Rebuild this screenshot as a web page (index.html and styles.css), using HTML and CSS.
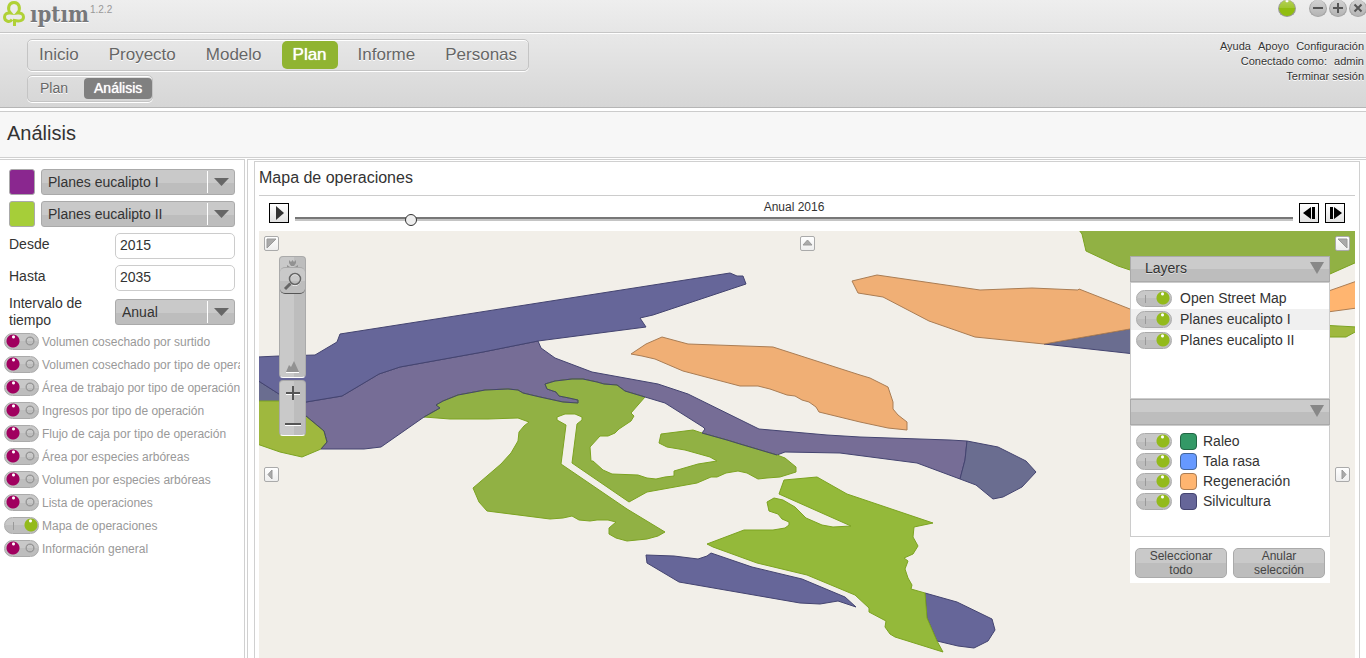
FILE: index.html
```html
<!DOCTYPE html>
<html lang="es">
<head>
<meta charset="UTF-8">
<meta name="viewport" content="width=device-width, initial-scale=1.0">
<title>Iptim - Análisis</title>
<link rel="stylesheet" href="styles.css">
</head>
<body>

<header class="topbar">
  <div class="logo">
    <svg class="logo-icon" width="24" height="28" viewBox="0 0 24 28" fill="none" stroke="#b0d136" stroke-width="3">
      <path d="M10 19.500C8 23 2.500 21.500 2.500 17C2.500 14 5 12.500 8.500 13C5 9 6.500 2.500 12 2.500C17.500 2.500 19 9 15.500 13C19 12.500 21.500 14 21.500 17C21.500 21 17 21.500 12.500 20.500V26"/>
    </svg>
    <span class="logo-text">ıptım</span>
    <span class="version">1.2.2</span>
  </div>
  <div class="window-buttons">
    <span class="status"></span>
    <button type="button" aria-label="Minimizar"><svg width="18" height="18" viewBox="0 0 18 18"><path d="M4 9H14"/></svg></button>
    <button type="button" aria-label="Ampliar"><svg width="18" height="18" viewBox="0 0 18 18"><path d="M4 9H14M9 4V14"/></svg></button>
    <button type="button" aria-label="Cerrar"><svg width="18" height="18" viewBox="0 0 18 18"><path d="M5.500 5.500L12.500 12.500M12.500 5.500L5.500 12.500"/></svg></button>
  </div>
</header>

<div class="navbar">
  <div class="menus">
    <nav class="menu">
      <a href="#">Inicio</a>
      <a href="#">Proyecto</a>
      <a href="#">Modelo</a>
      <a href="#" class="active">Plan</a>
      <a href="#">Informe</a>
      <a href="#">Personas</a>
    </nav>
    <nav class="submenu">
      <a href="#">Plan</a>
      <a href="#" class="active">Análisis</a>
    </nav>
  </div>
  <div class="user">
    <div><a href="#">Ayuda</a><a href="#">Apoyo</a><a href="#">Configuración</a></div>
    <div><span>Conectado como:</span><a href="#">admin</a></div>
    <div><a href="#">Terminar sesión</a></div>
  </div>
</div>

<h1>Análisis</h1>

<div class="page">

<aside class="sidebar">
  <form class="filters">
    <div class="plan-row">
      <span class="swatch plan-one"></span>
      <div class="select"><select aria-label="Plan I"><option>Planes eucalipto I</option></select></div>
    </div>
    <div class="plan-row">
      <span class="swatch plan-two"></span>
      <div class="select"><select aria-label="Plan II"><option>Planes eucalipto II</option></select></div>
    </div>
    <div class="field">
      <label for="desde">Desde</label>
      <input type="text" id="desde" value="2015">
    </div>
    <div class="field">
      <label for="hasta">Hasta</label>
      <input type="text" id="hasta" value="2035">
    </div>
    <div class="field interval">
      <label for="intervalo">Intervalo de tiempo</label>
      <div class="select"><select id="intervalo"><option>Anual</option></select></div>
    </div>
  </form>
  <div class="reports">
    <label><input type="checkbox" class="toggle">Volumen cosechado por surtido</label>
    <label><input type="checkbox" class="toggle">Volumen cosechado por tipo de operación</label>
    <label><input type="checkbox" class="toggle">Área de trabajo por tipo de operación</label>
    <label><input type="checkbox" class="toggle">Ingresos por tipo de operación</label>
    <label><input type="checkbox" class="toggle">Flujo de caja por tipo de operación</label>
    <label><input type="checkbox" class="toggle">Área por especies arbóreas</label>
    <label><input type="checkbox" class="toggle">Volumen por especies arbóreas</label>
    <label><input type="checkbox" class="toggle">Lista de operaciones</label>
    <label><input type="checkbox" class="toggle" checked>Mapa de operaciones</label>
    <label><input type="checkbox" class="toggle">Información general</label>
  </div>
</aside>

<main class="content">
<section class="panel">
  <h2>Mapa de operaciones</h2>

  <div class="timeline">
    <button type="button" aria-label="Reproducir"><svg width="18" height="18" viewBox="0 0 18 18"><path fill="#333" d="M6 2L14 9L6 16Z"/></svg></button>
    <div class="time">
      <label for="time">Anual 2016</label>
      <input type="range" id="time" min="0" max="18" value="2">
    </div>
    <div class="steps">
      <button type="button" aria-label="Anterior"><svg width="18" height="18" viewBox="0 0 18 18"><path d="M11 3V15L3 9ZM12 3H15V15H12Z"/></svg></button>
      <button type="button" aria-label="Siguiente"><svg width="18" height="18" viewBox="0 0 18 18"><path d="M8 3V15L16 9ZM4 3H7V15H4Z"/></svg></button>
    </div>
  </div>

  <div class="map">
    <svg class="areas" viewBox="259 231 1096 427" preserveAspectRatio="xMidYMin slice">
      <!-- vecinos -->
      <polygon class="green" points="1079,230 1082,234 1086,251 1118,266 1130,270 1200,285 1290,285 1330,274 1357,262 1357,230"/>
      <polygon class="slate" points="1044,344 1135,328 1200,345 1135,354"/>
      <polygon class="orange" points="852,281 877,275 980,290 1032,288 1078,290 1079,289 1130,309 1180,318 1130,329 1044,344 975,337 929,321 883,297 858,293"/>
      <polygon class="orange-light" points="1320,294 1357,281 1357,308 1320,313"/>
      <polygon class="lime" points="1320,325 1357,327 1357,331 1346,337 1320,337"/>
      <!-- franja norte -->
      <polygon class="slate" points="257,380 279,394 292,403 292,408 257,402"/>
      <polygon class="violet" points="306,402 342,396 379,374 400,367 483,352 538,341 541,348 555,358 592,372 658,384 688,394 759,429 827,435 860,437 950,440 967,441 965,460 960,479 917,463 840,453 785,452 777,455 740,444 727,440 702,433 705,429 703,427 665,403 645,397 625,391 617,385 604,384 597,382 583,379 572,379 555,381 545,384 547,389 556,392 559,396 569,398 578,400 578,403 563,402 540,397 523,393 518,390 508,389 485,390 458,395 443,401 436,405 440,408 424,417 381,447 364,449 321,449 327,442 324,431 306,416 290,402"/>
      <polygon class="blue" points="257,357 279,356 315,355 337,342 340,334 730,273 737,276 743,276 746,284 653,315 640,318 646,327 538,341 483,352 400,367 379,374 342,396 306,402 290,402 279,394 257,380"/>
      <polygon class="lime" points="257,401 282,401 306,416 324,431 327,442 321,449 302,457 280,452 257,444"/>
      <!-- eucaliptos centro -->
      <polygon class="green" points="424,417 450,419 488,419 518,418 529,422 524,426 519,432 518,441 511,453 501,464 473,488 479,502 487,511 550,519 563,518 572,516 579,520 590,521 597,520 608,520 616,522 609,528 609,534 616,538 627,541 647,539 658,536 665,532 627,509 561,464 566,425 557,420 557,417 565,414 575,414 582,417 582,420 577,424 572,463 629,502 647,492 697,483 711,477 717,477 726,473 738,471 747,473 758,479 767,478 780,477 796,472 796,467 785,458 777,455 740,444 727,440 702,433 693,430 661,434 659,443 667,447 685,450 710,457 717,461 698,464 674,471 674,476 665,477 656,479 647,478 638,475 612,474 603,470 593,461 591,461 590,447 600,436 608,436 615,433 619,429 631,421 634,416 631,413 645,397 625,391 617,385 604,384 597,382 583,379 572,379 555,381 545,384 547,389 556,392 559,396 569,398 578,400 578,403 563,402 540,397 523,393 518,390 508,389 485,390 458,395 443,401 436,405 440,408"/>
      <polyline class="edge" points="424,417 440,408 436,405 443,401 458,395 485,390 508,389 518,390 523,393 540,397 563,402 578,403 578,400 569,398 559,396 556,392 547,389 545,384 555,381 572,379 583,379 597,382 604,384 617,385 625,391 645,397"/>
      <polyline class="edge" points="702,433 727,440 740,444 777,455"/>
      <polyline class="edge" points="306,416 324,431 327,442 321,449"/>
      <polygon class="orange" points="631,354 646,344 662,337 688,344 773,347 860,375 870,378 888,387 893,402 893,409 898,415 907,422 907,430 888,428 860,422 819,412 816,407 809,402 802,400 795,396 787,395 770,389 758,386 740,386 683,371 655,359 642,356"/>
      <polygon class="slate" points="967,441 998,447 1026,461 1036,472 1022,487 1003,497 993,499 976,485 960,479 965,460"/>
      <!-- zona sur -->
      <polygon class="blue" points="925,593 957,602 992,619 995,630 988,641 974,648 958,646 937,641 927,618"/>
      <polygon class="lime-bright" points="707,544 744,530 773,530 785,528 789,525 789,522 782,519 778,514 769,511 767,502 774,498 783,500 795,507 806,518 822,525 833,527 851,526 779,494 784,480 817,477 847,494 933,523 914,527 913,537 918,546 913,554 904,558 908,561 905,569 908,578 912,585 911,589 925,593 927,618 937,641 943,652 895,637 890,634 885,627 886,621 869,612 869,608 855,595 807,575 757,563 713,547"/>
      <polygon class="blue" points="646,555 674,556 698,559 707,556 711,553 752,567 802,579 845,597 856,607 838,601 820,604 800,603 679,582 647,563"/>
    </svg>

    <button type="button" class="pan nw" aria-label="Noroeste"><svg width="13" height="13" viewBox="0 0 13 13"><path d="M2 2H11L2 11Z"/></svg></button>
    <button type="button" class="pan n" aria-label="Norte"><svg width="13" height="13" viewBox="0 0 13 13"><path d="M2 8L6.500 3L11 8Z"/></svg></button>
    <button type="button" class="pan ne" aria-label="Noreste"><svg width="13" height="13" viewBox="0 0 13 13"><path d="M2 2H11V11Z"/></svg></button>
    <button type="button" class="pan w" aria-label="Oeste"><svg width="13" height="13" viewBox="0 0 13 13"><path d="M7 2V11L3 6.500Z"/></svg></button>
    <button type="button" class="pan e" aria-label="Este"><svg width="13" height="13" viewBox="0 0 13 13"><path d="M6 2V11L10 6.500Z"/></svg></button>

    <div class="zoom">
      <div class="zoom-track">
        <svg width="25" height="10" viewBox="0 0 25 10"><path fill="#929292" d="M9 3L11 5L12.500 3L14 5L16 3V6L14 9H11L9 6ZM7 8L10 10H7ZM18 8L15 10H18Z"/></svg>
        <button type="button" class="zoom-handle" aria-label="Nivel de zoom"><svg width="25" height="26" viewBox="0 0 25 26" fill="none"><circle cx="15" cy="12" r="5.500" stroke="#fff" stroke-width="1"/><circle cx="15" cy="11" r="5.500" stroke="#666" stroke-width="1.500"/><path stroke="#666" stroke-width="3" d="M10.500 15.500L5 21"/></svg></button>
        <svg class="mountains" width="25" height="14" viewBox="0 0 25 14"><path fill="#929292" d="M6 11L9 4L11 6L14 0L19 11Z"/><path stroke="#fff" d="M6 11.500H19"/></svg>
      </div>
      <div class="zoom-buttons">
        <button type="button" aria-label="Acercar"><svg width="25" height="26" viewBox="0 0 25 26"><path stroke="#fff" d="M6 13.500H20"/><path stroke="#555" stroke-width="2" d="M6 12H20M13 5V19"/></svg></button>
        <button type="button" aria-label="Alejar"><svg width="25" height="26" viewBox="0 0 25 26"><path stroke="#fff" stroke-width="2" d="M5 18H21"/><path stroke="#555" stroke-width="2" d="M5 17H21"/></svg></button>
      </div>
    </div>

    <div class="layers">
      <div class="layers-head"><span>Layers</span><i></i></div>
      <div class="layers-list">
        <label><input type="checkbox" class="toggle" checked>Open Street Map</label>
        <label class="selected"><input type="checkbox" class="toggle" checked>Planes eucalipto I</label>
        <label><input type="checkbox" class="toggle" checked>Planes eucalipto II</label>
      </div>
      <div class="layers-head"><span></span><i></i></div>
      <div class="legend">
        <label><input type="checkbox" class="toggle" checked><span class="key raleo"></span>Raleo</label>
        <label><input type="checkbox" class="toggle" checked><span class="key tala"></span>Tala rasa</label>
        <label><input type="checkbox" class="toggle" checked><span class="key regeneracion"></span>Regeneración</label>
        <label><input type="checkbox" class="toggle" checked><span class="key silvicultura"></span>Silvicultura</label>
      </div>
      <div class="layers-buttons">
        <button type="button">Seleccionar todo</button>
        <button type="button">Anular selección</button>
      </div>
    </div>
  </div>
</section>
</main>

</div>

</body>
</html>
```

FILE: styles.css
```css
* { box-sizing: border-box; }
body { margin: 0; height: 100vh; display: flex; flex-direction: column; overflow: hidden; background: #fff; color: #333; font-family: "Liberation Sans", Arial, sans-serif; font-size: 14px; }
a { color: inherit; text-decoration: none; }
button { padding: 0; font-family: inherit; cursor: pointer; }
svg { display: block; }

/* header */
.topbar { display: flex; justify-content: space-between; height: 33px; flex: none; background: linear-gradient(#eee, #e6e6e6); border-bottom: 1px solid #c6c6c6; }
.logo { display: flex; align-items: flex-start; padding-left: 2px; }
.logo-text { margin-left: 4px; font: bold 22px/28px "DejaVu Serif Condensed", "DejaVu Serif", serif; color: #77787b; text-shadow: 0 1px 0 #fff; }
.version { margin-left: 1px; font-size: 10px; line-height: 19px; color: #999; }
.window-buttons { display: flex; gap: 2px; align-items: flex-start; }
.window-buttons button { width: 18px; height: 17px; border: 1px solid #a4a4a4; border-top: 0; border-radius: 50%; background: linear-gradient(#d2d2d2, #b4b4b4); display: flex; align-items: center; justify-content: center; }
.window-buttons button:last-child { margin-right: -1px; }
.window-buttons svg { flex: none; fill: none; stroke: #555; stroke-width: 2; }
.status { width: 18px; height: 17px; margin-right: 11px; border: 1px solid #999; border-top: 0; border-radius: 50%; background: radial-gradient(circle at 50% 5%, #fff 0 1px, transparent 2px), linear-gradient(#b4cf57, #a0c62f 50%, #91bd11 50%); }

.navbar { display: flex; justify-content: space-between; height: 75px; flex: none; padding: 5px 0 0 27px; background: linear-gradient(#e8e8e8, #d6d6d6); border-top: 1px solid #fff; border-bottom: 1px solid #b5b5b5; }
.menus { display: flex; flex-direction: column; align-items: flex-start; gap: 4px; }
.menu, .submenu { display: flex; border: 1px solid #c4c4c4; border-radius: 5px; box-shadow: 0 1px 0 #fff, inset 0 1px 0 #fff; color: #666; text-shadow: 0 1px 0 #fff; }
.menu { gap: 10px; padding: 1px; font-size: 17px; line-height: 28px; }
.menu a { padding: 0 10px; border-radius: 5px; }
.menu .active { padding: 0 11px; background: #90b431; color: #fff; text-shadow: 0 0 1px #fff; }
.submenu { gap: 6px; padding: 2px 0 2px 2px; font-size: 14px; line-height: 21px; }
.submenu a { padding: 0 10px; border-radius: 4px; }
.submenu .active { background: #808080; color: #fff; text-shadow: 0 0 1px #fff; }
.user { padding: 0 2px; font-size: 11px; line-height: 15px; text-align: right; text-shadow: 0 1px 0 #fff; }
.user div { display: flex; justify-content: flex-end; gap: 7px; }

h1 { flex: none; margin: 3px 0 0; padding: 0 7px; height: 47px; border-top: 1px solid #ccc; border-bottom: 1px solid #d0d0d0; background: #f7f7f7; font-size: 20px; line-height: 43px; font-weight: normal; }
.page { flex: 1; display: flex; gap: 2px; min-height: 0; padding-top: 1px; }

/* sidebar */
.sidebar { width: 245px; flex: none; border: 1px solid #d0d0d0; border-width: 1px 1px 0 0; padding: 9px 4px 0 4px; overflow: hidden; }
.filters { display: flex; flex-direction: column; gap: 6px; padding: 0 5px; }
.plan-row { display: grid; grid-template-columns: 26px 1fr; gap: 6px; }
.swatch { border: 1px solid #aaa; border-radius: 3px; }
.plan-one { background: #8a278f; }
.plan-two { background: #a6ce39; }
.field { display: grid; grid-template-columns: 1fr 120px; line-height: 17px; }
.field label { padding-top: 3px; }
.interval { align-items: center; margin-top: -2px; }
.interval label { padding: 0; width: 90px; }
.field input { width: 100%; height: 26px; padding: 0 4px 2px; border: 1px solid #ccc; border-radius: 5px; font: 14px "Liberation Sans", Arial, sans-serif; color: #333; }
.select { position: relative; }
.select select { display: block; appearance: none; width: 100%; height: 26px; padding: 0 30px 0 6px; border: 1px solid #aaa; border-radius: 3px; background: linear-gradient(#fff, #fff) right 26px top 1px / 1px 22px no-repeat, linear-gradient(#c9c9c9 55%, #bdbdbd 55%); font: 14px "Liberation Sans", Arial, sans-serif; color: #333; }
.select::after { content: ""; position: absolute; right: 6px; top: 9px; width: 15px; height: 8px; background: #666; clip-path: polygon(0 0, 100% 0, 50% 100%); pointer-events: none; }
.reports { margin-top: 1px; overflow: hidden; }
.reports label { display: flex; align-items: center; gap: 3px; height: 23px; font-size: 12px; color: #999; white-space: nowrap; }

/* on/off switch */
.toggle { appearance: none; flex: none; width: 35px; height: 17px; margin: 0; border: 1px solid #aaa; border-radius: 9px; background: radial-gradient(circle at 50% 15%, #fff 0 1px, transparent 2px) 2px 1px / 13px 13px no-repeat, radial-gradient(circle at 8px 7px, #a0005f 0 6px, transparent 7px), radial-gradient(circle at 25px 7px, transparent 0 3px, #999 3px 4px, transparent 5px), linear-gradient(#c8c8c8 50%, #bdbdbd 50%); }
.toggle:checked { background: radial-gradient(circle at 50% 15%, #fff 0 1px, transparent 2px) 19px 1px / 13px 13px no-repeat, radial-gradient(circle at 26px 7px, #93ba1b 0 6px, transparent 7px), linear-gradient(#999, #999) 8px 4px / 1px 8px no-repeat, linear-gradient(#c8c8c8 50%, #bdbdbd 50%); }

/* map panel */
.content { flex: 1; min-width: 0; display: flex; padding: 1px 6px 0; border: 1px solid #d0d0d0; border-width: 1px 0 0 1px; }
.panel { flex: 1; min-width: 0; display: flex; flex-direction: column; padding: 0 4px; border: 1px solid #d0d0d0; border-bottom: 0; }
h2 { margin: 0; height: 34px; border-bottom: 1px solid #ccc; font-size: 16px; line-height: 31px; font-weight: normal; }
.timeline { display: flex; align-items: center; gap: 6px; height: 35px; padding: 0 10px 1px; }
.timeline button { width: 20px; height: 20px; border: 1px solid #000; background: linear-gradient(#fff, #e2e2e2); }
.time { flex: 1; display: flex; flex-direction: column; align-items: center; font-size: 12px; line-height: 13px; }
.time input { appearance: none; width: 100%; height: 12px; margin: 0; background: linear-gradient(#777 50%, #c4c4c4 50%) 0 3px / 100% 4px no-repeat; }
.time input::-webkit-slider-thumb { appearance: none; width: 12px; height: 12px; border: 1px solid #333; border-radius: 50%; background: #eee; }
.steps { display: flex; gap: 6px; }
.map { position: relative; flex: 1; min-height: 0; overflow: hidden; background: #f2efe9; }
.areas { width: 100%; height: 100%; stroke-width: 1; }
.blue { fill: #666699; stroke: #444470; }
.violet { fill: #766d96; stroke: #444470; }
.slate { fill: #6a6d90; stroke: #444470; }
.green { fill: #91b144; stroke: #7ca321; }
.lime { fill: #9fb83e; stroke: #7ca321; }
.lime-bright { fill: #94b93a; stroke: #7ca321; }
.orange { fill: #f0af75; stroke: #aa7d54; }
.orange-light { fill: #ffb570; stroke: #aa7d54; }
.edge { fill: none; stroke: #444470; }

.pan { position: absolute; width: 15px; height: 15px; border: 1px solid #aaa; border-radius: 2px; background: linear-gradient(#fff, #eee); }
.pan svg { fill: #aaa; stroke: #999; stroke-width: 1; }
.nw { left: 5px; top: 5px; }
.n { left: calc(50% - 7px); top: 5px; }
.ne { right: 5px; top: 5px; }
.w { left: 5px; top: 236px; }
.e { right: 5px; top: 236px; }

.zoom { position: absolute; left: 20px; top: 25px; width: 27px; }
.zoom-track, .zoom-buttons { border: 1px solid #aaa; border-bottom-color: #fff; border-radius: 4px; background: linear-gradient(90deg, #c9c9c9 55%, #bdbdbd 55%); }
.zoom-track { display: flex; flex-direction: column; height: 122px; }
.zoom-handle { width: 25px; height: 27px; border: 0; border-top: 1px solid #aaa; border-bottom: 1px solid #555; border-radius: 5px; background: linear-gradient(#c9c9c9 50%, #bdbdbd 50%); }
.mountains { margin-top: auto; margin-bottom: 2px; }
.zoom-buttons { display: flex; flex-direction: column; margin-top: 2px; height: 56px; }
.zoom-buttons button { width: 25px; height: 26px; border: 0; background: none; }

.layers { position: absolute; right: 25px; top: 25px; width: 200px; background: #fff; }
.layers-head { display: flex; align-items: center; justify-content: space-between; height: 26px; padding: 0 5px 2px 14px; border: 1px solid #aaa; background: linear-gradient(#cbcbcb 50%, #bdbdbd 50%); text-shadow: 0 1px 0 #ddd; }
.layers-head i { width: 14px; height: 12px; background: #888; clip-path: polygon(0 0, 100% 0, 50% 100%); }
.layers-list, .legend { border: 1px solid #ccc; }
.layers-list { height: 117px; padding-top: 5px; }
.legend { height: 112px; padding-top: 5px; }
.layers label { display: flex; align-items: center; gap: 8px; height: 21px; padding-left: 5px; line-height: 19px; }
.legend label { height: 20px; gap: 6px; }
.layers .selected { background: #f0f0f0; }
.layers .toggle { width: 36px; }
.key { width: 17px; height: 17px; margin-left: 2px; border: 1px solid #444470; border-radius: 4px; }
.raleo { background: #339966; border-color: #226644; }
.tala { background: #6699ff; border-color: #446699; }
.regeneracion { background: #ffb570; border-color: #aa7d54; }
.silvicultura { background: #666699; }
.layers-buttons { display: grid; grid-template-columns: 1fr 1fr; gap: 6px; padding: 11px 5px 5px; }
.layers-buttons button { height: 30px; padding: 0 10px; border: 1px solid #aaa; border-radius: 5px; background: linear-gradient(#c9c9c9 50%, #bdbdbd 50%); font-size: 12px; line-height: 14px; color: #444; }
```
